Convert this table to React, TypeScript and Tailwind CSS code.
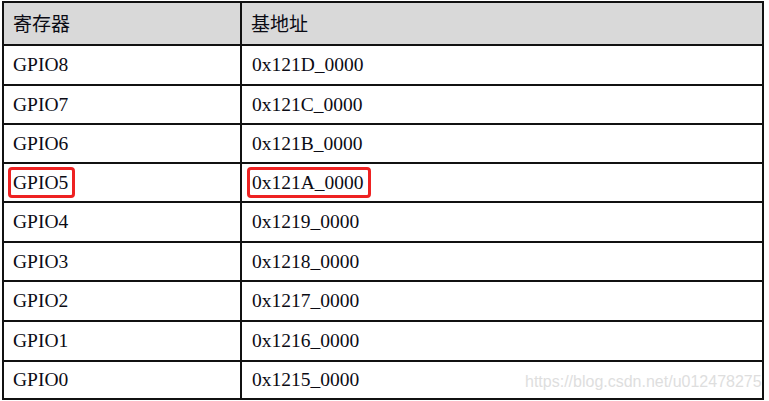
const rows = [
  { name: 'GPIO8', addr: '0x121D_0000', h: 'h-[40px]' },
  { name: 'GPIO7', addr: '0x121C_0000', h: 'h-[39px]' },
  { name: 'GPIO6', addr: '0x121B_0000', h: 'h-[39px]' },
  { name: 'GPIO5', addr: '0x121A_0000', h: 'h-[39px]', mark: true },
  { name: 'GPIO4', addr: '0x1219_0000', h: 'h-[40px]' },
  { name: 'GPIO3', addr: '0x1218_0000', h: 'h-[39px]' },
  { name: 'GPIO2', addr: '0x1217_0000', h: 'h-[40px]' },
  { name: 'GPIO1', addr: '0x1216_0000', h: 'h-[40px]' },
  { name: 'GPIO0', addr: '0x1215_0000', h: 'h-[38px]' },
]

function Mark({ children }: { children: string }) {
  return (
    <span className="-ml-[5px] rounded-[4px] border-[3px] border-[#ee2222] pl-[2px] pr-[4px] py-[2px] leading-[21px]">
      {children}
    </span>
  )
}

export default function App() {
  return (
    <div className="relative h-[401px] w-[769px] overflow-hidden bg-white">
      <div className="ml-[2px] mt-[1px] w-[762px] border-x-2 border-t-2 border-[#111] font-['Liberation_Serif',serif] text-[19.5px] text-[#0b0b14]">
        <div className="flex h-[43px] border-b-2 border-[#111] bg-[#d9d9d9] font-['Noto_Sans_CJK_SC',sans-serif] text-[19px]">
          <div className="flex w-[238px] items-center border-r-2 border-[#111] pl-[9px]">寄存器</div>
          <div className="flex flex-1 items-center pl-[9px]">基地址</div>
        </div>
        {rows.map((r) => (
          <div key={r.name} className={`flex border-b-2 border-[#111] ${r.h}`}>
            <div className="flex w-[238px] items-center border-r-2 border-[#111] pl-[9px]">
              {r.mark ? <Mark>{r.name}</Mark> : r.name}
            </div>
            <div className="flex flex-1 items-center pl-[10px]">
              {r.mark ? <Mark>{r.addr}</Mark> : r.addr}
            </div>
          </div>
        ))}
      </div>
      <div className="absolute left-[525px] top-[370px] font-['Liberation_Sans',sans-serif] text-[16px] text-[#dedede]">
        https://blog.csdn.net/u012478275
      </div>
    </div>
  )
}
